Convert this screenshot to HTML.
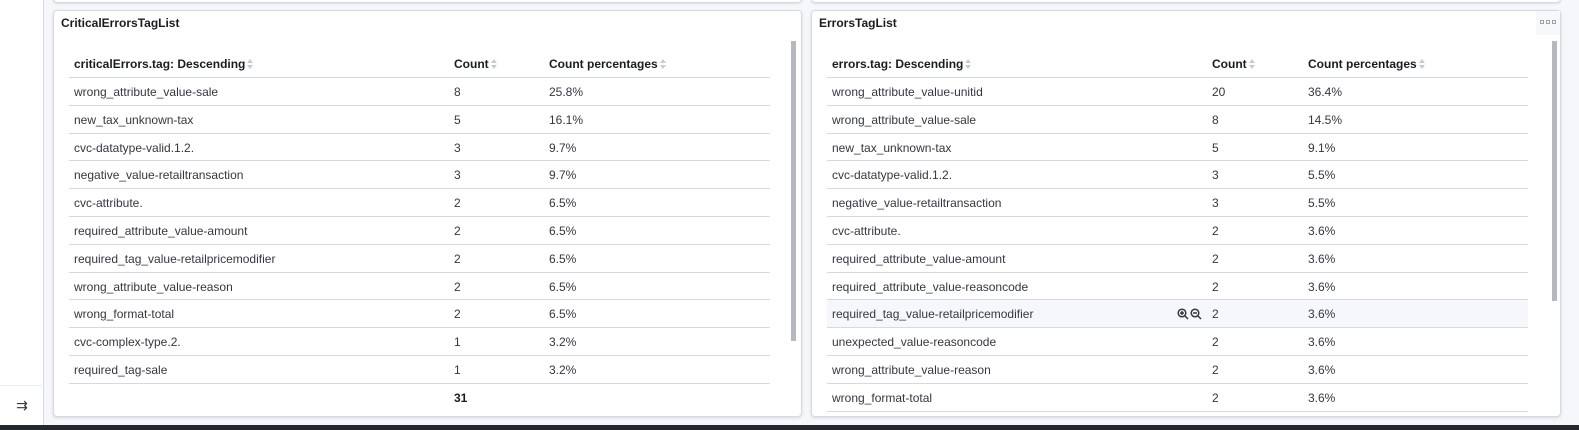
<!DOCTYPE html>
<html><head><style>
*{margin:0;padding:0;box-sizing:border-box}
body{width:1579px;height:430px;background:#f5f7fa;font-family:"Liberation Sans",sans-serif;position:relative;overflow:hidden;color:#343741}
.side{position:absolute;left:0;top:0;width:44px;height:425px;background:#fff;border-right:1px solid #d3dae6}
.side .bot{position:absolute;left:0;top:385px;width:44px;height:40px;border-top:1px solid #e9edf3;font-size:14px;text-align:center;line-height:38px;color:#343741}
.strip{position:absolute;left:0;top:425px;width:1579px;height:5px;background:#25282f}
.topp{position:absolute;top:-10px;height:13px;background:#fff;border:1px solid #d3dae6;border-radius:4px;box-shadow:0 1px 2px rgba(0,0,0,.1)}
.panel{position:absolute;top:10px;height:407px;background:#fff;border:1px solid #d3dae6;border-radius:4px;box-shadow:0 1px 3px rgba(0,0,0,.12)}
.title{position:absolute;left:7px;top:5px;font-size:12px;font-weight:bold;color:#1a1c21}
.sb{position:absolute;width:5px;background:#b4b8bf}
.row{position:absolute;height:27.8px;border-bottom:1px solid #d3dae6;font-size:12px;line-height:28px}
.row span{position:absolute;top:0}
.hd{font-weight:bold;color:#1a1c21}
.ar{display:inline-block;vertical-align:middle;margin-left:2px;width:7px;height:11px;position:relative}
.ar:before{content:"";position:absolute;left:0;top:0;border-left:3.5px solid transparent;border-right:3.5px solid transparent;border-bottom:4px solid #c5cbd6}
.ar:after{content:"";position:absolute;left:0;top:6px;border-left:3.5px solid transparent;border-right:3.5px solid transparent;border-top:4px solid #c5cbd6}
.hl{background:#f5f7fa}
</style></head><body>
<div class="side"><div class="bot">&#8649;</div></div>
<div class="strip"></div>
<div class="topp" style="left:53px;width:749px"></div>
<div class="topp" style="left:811px;width:750px"></div>

<div class="panel" style="left:53px;width:749px">
<div class="title">CriticalErrorsTagList</div>
<div class="sb" style="left:737px;top:30px;height:300px"></div>
</div>
<div class="panel" style="left:811px;width:750px">
<div class="title">ErrorsTagList</div>
<div style="position:absolute;right:0;top:0;width:24px;height:24px;background:#f7f8fa">
<svg width="24" height="24"><g fill="none" stroke="#98a2b3" stroke-width="1"><rect x="4.5" y="9.5" width="3" height="3"/><rect x="10.5" y="9.5" width="3" height="3"/><rect x="16.5" y="9.5" width="3" height="3"/></g></svg></div>
<div class="sb" style="left:740px;top:30px;height:260px"></div>
</div>

<div id="L"></div>
<script>
var zi='<svg width="26" height="12" viewBox="0 0 26 12"><g fill="none" stroke="#343741" stroke-width="1.5"><circle cx="5" cy="5" r="3.8"/><path d="M8 8l3 3M3 5h4M5 3v4"/><circle cx="18" cy="5" r="3.8"/><path d="M21 8l3 3M16 5h4"/></g></svg>';
function tbl(x0,w,cx,px,rows,h,hlIdx,total){
 var o='';var y=50;
 o+='<div class="row hd" style="left:'+x0+'px;top:'+y+'px;width:'+w+'px"><span style="left:5px">'+h+'<i class="ar"></i></span><span style="left:'+cx+'px">Count<i class="ar"></i></span><span style="left:'+px+'px">Count percentages<i class="ar"></i></span></div>';
 y+=28;
 rows.forEach(function(r,i){
  o+='<div class="row'+(i===hlIdx?' hl':'')+'" style="left:'+x0+'px;top:'+y.toFixed(1)+'px;width:'+w+'px"><span style="left:5px">'+r[0]+'</span>'+(i===hlIdx?'<span style="left:'+(cx-35)+'px;top:8px;line-height:0">'+zi+'</span>':'')+'<span style="left:'+cx+'px">'+r[1]+'</span><span style="left:'+px+'px">'+r[2]+'</span></div>';
  y+=27.8;
 });
 if(total) o+='<div style="position:absolute;left:'+(x0+cx)+'px;top:'+(y+7)+'px;font-size:12px;font-weight:bold;color:#1a1c21">'+total+'</div>';
 return o;
}
var a=[["wrong_attribute_value-sale",8,"25.8%"],["new_tax_unknown-tax",5,"16.1%"],["cvc-datatype-valid.1.2.",3,"9.7%"],["negative_value-retailtransaction",3,"9.7%"],["cvc-attribute.",2,"6.5%"],["required_attribute_value-amount",2,"6.5%"],["required_tag_value-retailpricemodifier",2,"6.5%"],["wrong_attribute_value-reason",2,"6.5%"],["wrong_format-total",2,"6.5%"],["cvc-complex-type.2.",1,"3.2%"],["required_tag-sale",1,"3.2%"]];
var b=[["wrong_attribute_value-unitid",20,"36.4%"],["wrong_attribute_value-sale",8,"14.5%"],["new_tax_unknown-tax",5,"9.1%"],["cvc-datatype-valid.1.2.",3,"5.5%"],["negative_value-retailtransaction",3,"5.5%"],["cvc-attribute.",2,"3.6%"],["required_attribute_value-amount",2,"3.6%"],["required_attribute_value-reasoncode",2,"3.6%"],["required_tag_value-retailpricemodifier",2,"3.6%"],["unexpected_value-reasoncode",2,"3.6%"],["wrong_attribute_value-reason",2,"3.6%"],["wrong_format-total",2,"3.6%"]];
document.getElementById('L').innerHTML=tbl(69,701,385,480,a,"criticalErrors.tag: Descending",-1,"31")+tbl(827,701,385,481,b,"errors.tag: Descending",8,"");
</script>
</body></html>
